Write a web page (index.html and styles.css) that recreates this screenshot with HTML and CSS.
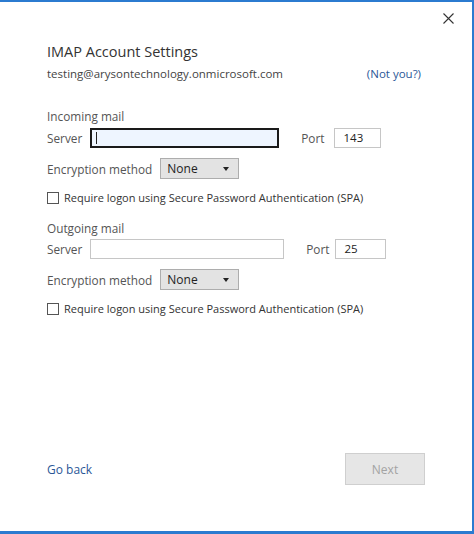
FILE: index.html
```html
<!DOCTYPE html>
<html lang="en">
<head>
  <meta charset="UTF-8">
  <title>IMAP Account Settings</title>
  <link rel="stylesheet" href="styles.css">
</head>
<body>
  <div class="dialog">
    <div class="titlebar">
      <button class="close" aria-label="Close">
        <svg width="11" height="11" viewBox="0 0 11 11"><path d="M0.5 0.5 L10.5 10.5 M10.5 0.5 L0.5 10.5" stroke="#333" stroke-width="1.1" fill="none"/></svg>
      </button>
    </div>

    <div class="content">
      <h1>IMAP Account Settings</h1>
      <div class="account">
        <span>testing@arysontechnology.onmicrosoft.com</span>
        <a href="#" class="link">(Not you?)</a>
      </div>

      <section class="group incoming">
        <div class="group-title">Incoming mail</div>
        <div class="row">
          <label>Server</label>
          <div class="input server focused"><span class="caret"></span></div>
          <label class="port-label">Port</label>
          <div class="input port">143</div>
        </div>
        <div class="row enc">
          <label>Encryption method</label>
          <div class="select">None <span class="arrow"></span></div>
        </div>
        <div class="check">
          <span class="box"></span>
          <span>Require logon using Secure Password Authentication (SPA)</span>
        </div>
      </section>

      <section class="group outgoing">
        <div class="group-title">Outgoing mail</div>
        <div class="row">
          <label>Server</label>
          <div class="input server"></div>
          <label class="port-label">Port</label>
          <div class="input port">25</div>
        </div>
        <div class="row enc">
          <label>Encryption method</label>
          <div class="select">None <span class="arrow"></span></div>
        </div>
        <div class="check">
          <span class="box"></span>
          <span>Require logon using Secure Password Authentication (SPA)</span>
        </div>
      </section>
    </div>

    <div class="footer">
      <a href="#" class="link back">Go back</a>
      <button class="next" disabled>Next</button>
    </div>
  </div>
</body>
</html>
```

FILE: styles.css
```css
body {
  margin: 0;
  font-family: "Open Sans", "Noto Sans", sans-serif;
  color: #444;
  background: #fff;
}

.dialog {
  box-sizing: border-box;
  width: 474px;
  height: 534px;
  border-top: 2px solid #2b7bd0;
  border-right: 2px solid #2b7bd0;
  border-bottom: 3px solid #2b7bd0;
  display: flex;
  flex-direction: column;
  background: #fff;
}

.titlebar {
  display: flex;
  justify-content: flex-end;
  padding: 9px 17px 0 0;
  height: 21px;
}

.close {
  border: none;
  background: none;
  padding: 0;
  width: 14px;
  height: 14px;
  display: flex;
  align-items: center;
  justify-content: center;
}

.content {
  padding: 0 51px 0 47px;
  flex: 1;
}

h1 {
  font-weight: normal;
  font-size: 14.5px;
  color: #333;
  margin: 9px 0 0;
  line-height: 22px;
}

.account {
  display: flex;
  justify-content: space-between;
  font-size: 11.5px;
  margin-top: 2px;
  line-height: 18px;
  color: #444;
}

.link {
  color: #2b5797;
  text-decoration: none;
}

.group {
  font-size: 11.8px;
  color: #555;
}

.incoming {
  margin-top: 24px;
}

.outgoing {
  margin-top: 13px;
}

.group-title {
  line-height: 18px;
}

.row {
  display: flex;
  align-items: center;
  height: 20px;
  margin-top: 3px;
}

.outgoing .row {
  margin-top: 2px;
}

.row label {
  line-height: 18px;
}

.input {
  box-sizing: border-box;
  height: 20px;
  border: 1px solid #c6c6c6;
  background: #fff;
  font-size: 11.5px;
  color: #222;
  padding: 0 9px;
  line-height: 18px;
}

.server {
  margin-left: 8px;
  width: 194px;
}

.port-label {
  margin-left: 22px;
}

.port {
  margin-left: 5px;
  width: 51px;
}

.incoming .server {
  width: 189px;
  border: 2px solid #1a1a1a;
  background: #eef5ff;
  padding: 0 4px;
  display: flex;
  align-items: center;
}

.incoming .port-label {
  margin-left: 22px;
}

.incoming .port {
  margin-left: 9px;
  width: 47px;
}

.caret {
  display: block;
  width: 1px;
  height: 12px;
  background: #222;
}

.row.enc {
  margin-top: 10px;
  height: 21px;
}

.select {
  box-sizing: border-box;
  margin-left: 8px;
  width: 79px;
  height: 21px;
  border: 1px solid #adadad;
  background: #e3e3e3;
  color: #222;
  font-size: 12px;
  line-height: 19px;
  padding: 0 0 0 6px;
  position: relative;
}

.arrow {
  position: absolute;
  right: 9px;
  top: 8px;
  width: 0;
  height: 0;
  border-left: 3.5px solid transparent;
  border-right: 3.5px solid transparent;
  border-top: 4px solid #222;
}

.check {
  display: flex;
  align-items: center;
  margin-top: 11px;
  font-size: 11px;
  color: #333;
  line-height: 16px;
}

.box {
  box-sizing: border-box;
  width: 12px;
  height: 12px;
  border: 1px solid #555;
  background: #fff;
  margin-right: 5px;
}

.footer {
  display: flex;
  justify-content: space-between;
  align-items: center;
  padding: 0 47px 46px 47px;
}

.back {
  font-size: 12px;
}

.next {
  box-sizing: border-box;
  width: 80px;
  height: 32px;
  border: 1px solid #cfcfcf;
  background: #e6e6e6;
  color: #a3a3a3;
  font-family: inherit;
  font-size: 12px;
}
```
